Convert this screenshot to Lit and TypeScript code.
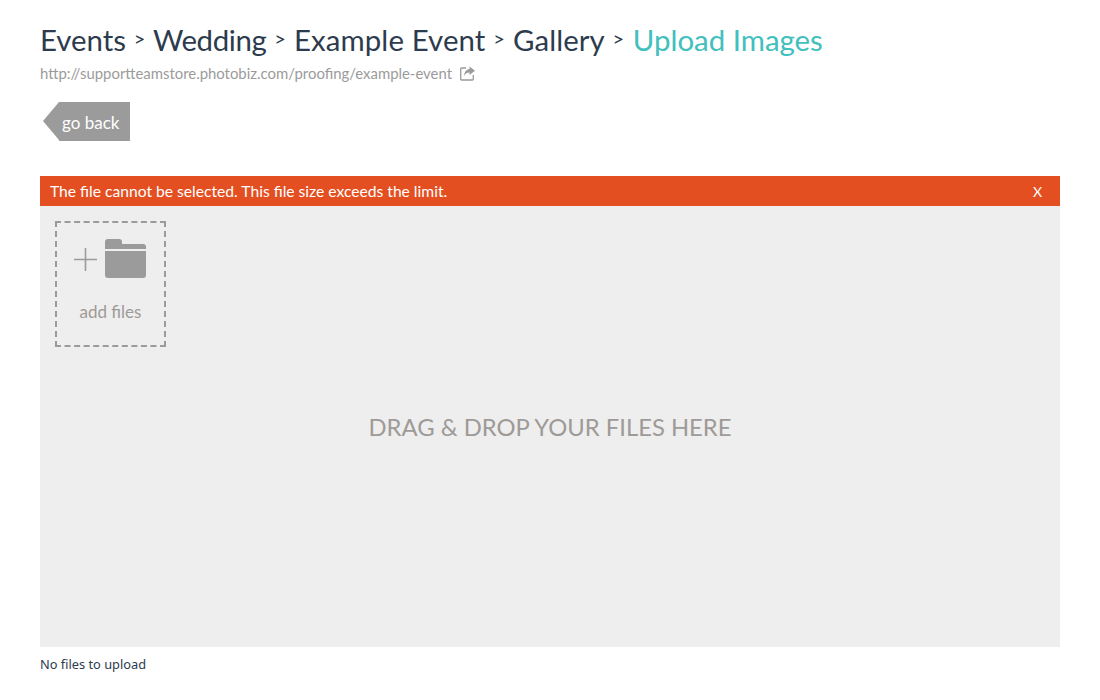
import { LitElement, html, css } from "lit";
import { customElement } from "lit/decorators.js";

@customElement("app-root")
export class AppRoot extends LitElement {
  static styles = css`
    :host { display: block; width: 1100px; height: 700px; background: #fff; font-family: Lato, "Liberation Sans", sans-serif; box-sizing: border-box; padding: 0 40px; overflow: hidden; }
    .crumbs { display: flex; align-items: center; height: 40px; margin-top: 20px; font-size: 29.4px; line-height: 40px; color: #2d3b4e; white-space: nowrap; }
    .sep { font-size: 20px; margin: 0 7.7px; position: relative; top: -2px; }
    .wedding { letter-spacing: -0.35px; }
    .example { letter-spacing: 0.1px; margin-left: 0.5px; }
    .gallery { letter-spacing: 0.1px; margin-left: 0.5px; }
    .current { color: #41c0bd; margin-left: 1px; }
    .url { display: flex; align-items: center; height: 20px; margin-top: 3px; font-size: 14.9px; line-height: 20px; color: #9b9b9b; }
    .url svg { margin-left: 8px; }
    .back { display: flex; margin: 19px 0 0 3px; width: 87px; height: 39px; }
    .back-arrow { width: 0; height: 0; border-style: solid; border-width: 19.5px 16px 19.5px 0; border-color: transparent #9b9b9b transparent transparent; }
    .back-label { flex: 1; background: #9b9b9b; color: #fff; font-size: 17px; line-height: 41px; padding-left: 3px; }
    .alert { display: flex; justify-content: space-between; align-items: center; margin-top: 35px; height: 30px; padding: 0 18px 0 10px; background: #e44f21; color: #fff; font-size: 15.65px; }
    .close { font-size: 14px; }
    .drop { position: relative; height: 441px; background: #eee; display: flex; align-items: center; justify-content: center; }
    .hint { font-size: 23.8px; color: #9e9a97; }
    .add { position: absolute; left: 15px; top: 15px; width: 111px; height: 126px; box-sizing: border-box; border: 2px dashed #9b9b9b; display: flex; flex-direction: column; align-items: center; color: #9e9a97; font-size: 17px; }
    .icons { display: flex; align-items: center; gap: 8px; margin-top: 16px; margin-right: 1px; }
    .plus { margin-top: 2px; }
    .label { margin-top: 22px; line-height: 24px; }
    .foot { margin-top: 8px; font-size: 12.8px; line-height: 18px; color: #2d3b4e; font-family: "Noto Sans", "Open Sans", sans-serif; }
  `;

  render() {
    return html`
      <div class="crumbs">
        <span>Events</span><span class="sep">&gt;</span>
        <span class="wedding">Wedding</span><span class="sep">&gt;</span>
        <span class="example">Example Event</span><span class="sep">&gt;</span>
        <span class="gallery">Gallery</span><span class="sep">&gt;</span>
        <span class="current">Upload Images</span>
      </div>
      <div class="url">
        <span>http://supportteamstore.photobiz.com/proofing/example-event</span>
        <svg width="15" height="15" viewBox="0 0 15 15" fill="none">
          <path d="M6 2H1.5a.8.8 0 0 0-.8.8v10.4a.8.8 0 0 0 .8.8h11a.8.8 0 0 0 .8-.8V9" stroke="#9b9b9b" stroke-width="1.3"/>
          <path d="M9.5 0.5 15 4.8 9.5 9V6.6C7 6.6 5.4 7.6 4.2 10 4.2 6.2 6 3.4 9.5 3Z" fill="#9b9b9b"/>
        </svg>
      </div>
      <div class="back">
        <div class="back-arrow"></div>
        <div class="back-label">go back</div>
      </div>
      <div class="alert">
        <span>The file cannot be selected. This file size exceeds the limit.</span>
        <span class="close">X</span>
      </div>
      <div class="drop">
        <div class="add">
          <div class="icons">
            <svg class="plus" width="23" height="23" viewBox="0 0 23 23">
              <path d="M11.5 0V23M0 11.5H23" stroke="#9b9b9b" stroke-width="1.6"/>
            </svg>
            <svg width="41" height="39" viewBox="0 0 41 39">
              <path d="M0 3a3 3 0 0 1 3-3H14a3 3 0 0 1 3 3V5H38a3 3 0 0 1 3 3V10H0Z" fill="#9b9b9b"/>
              <path d="M0 12H41V36a3 3 0 0 1-3 3H3a3 3 0 0 1-3-3Z" fill="#9b9b9b"/>
            </svg>
          </div>
          <div class="label">add files</div>
        </div>
        <div class="hint">DRAG &amp; DROP YOUR FILES HERE</div>
      </div>
      <div class="foot">No files to upload</div>
    `;
  }
}
